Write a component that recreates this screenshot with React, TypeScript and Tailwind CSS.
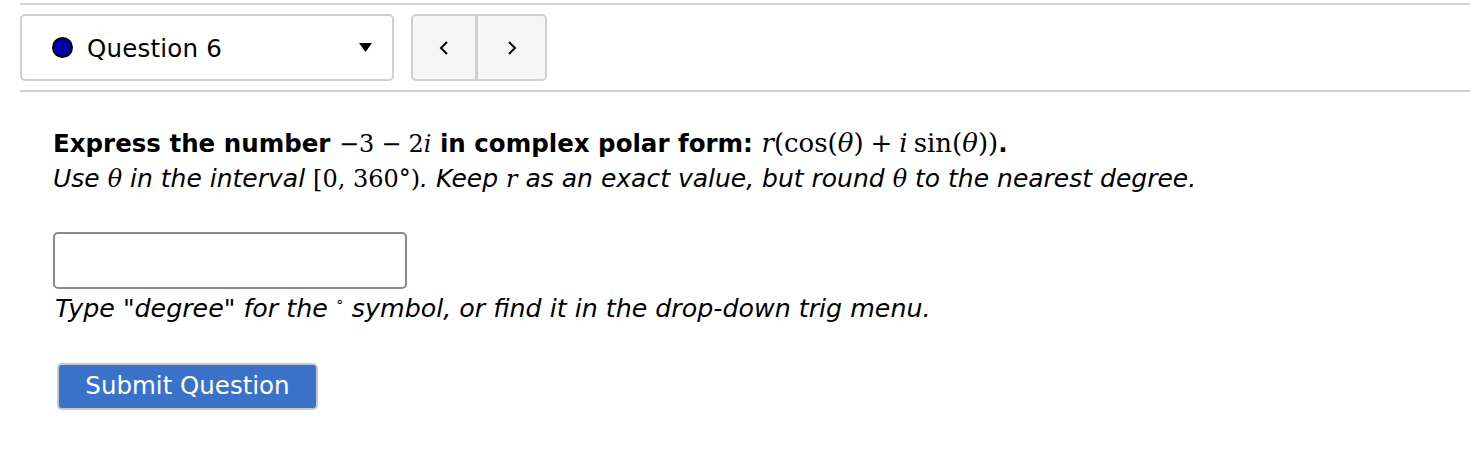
import React from 'react';

const M: React.FC<{ children: React.ReactNode; className?: string }> = ({ children, className }) => (
  <span className={`font-['DejaVu_Serif',serif] font-normal not-italic leading-none ${className ?? 'text-[24px]'}`}>{children}</span>
);

const V: React.FC<{ children: React.ReactNode }> = ({ children }) => <span className="italic">{children}</span>;

const Op: React.FC<{ children: React.ReactNode }> = ({ children }) => <span className="mx-[7px]">{children}</span>;

const App: React.FC = () => {
  return (
    <div className="w-[1470px] h-[454px] bg-white font-['DejaVu_Sans',sans-serif] text-black">
      <div className="pl-5 pt-[3px]">
        <div className="h-[2px] bg-[#d0d0d0]" />
        <div className="flex items-center gap-[17px] py-[9px]">
          <div className="w-[374px] h-[67px] border-2 border-[#d0d0d0] rounded-[5px] flex items-center pl-[30px] pr-[20px]">
            <span className="w-[21px] h-[21px] rounded-full bg-[#0000a8] border-2 border-black" />
            <span className="ml-[14px] mt-[3px] text-[24.5px] tracking-[0.2px]">Question 6</span>
            <svg className="ml-auto" width="13" height="9" viewBox="0 0 13 9">
              <path d="M0 0 L13 0 L6.5 9 Z" fill="#000" />
            </svg>
          </div>
          <div className="w-[136px] h-[67px] border-2 border-[#d0d0d0] rounded-[5px] bg-[#f6f6f6] flex">
            <button className="w-[65px] flex items-center justify-center border-r-[3px] border-[#d0d0d0]">
              <svg width="10" height="16" viewBox="0 0 10 16"><path d="M8 2 L2 8 L8 14" fill="none" stroke="#000" strokeWidth="2" /></svg>
            </button>
            <button className="flex-1 flex items-center justify-center">
              <svg width="10" height="16" viewBox="0 0 10 16"><path d="M2 2 L8 8 L2 14" fill="none" stroke="#000" strokeWidth="2" /></svg>
            </button>
          </div>
        </div>
        <div className="h-[2px] bg-[#d0d0d0]" />
      </div>

      <div className="pl-[53px] pt-[34px]">
        <p className="text-[24.5px] font-bold leading-[36px] whitespace-nowrap">
          Express the number <M>−3<Op>−</Op>2<V>i</V></M> in complex polar form:{' '}
          <M className="text-[26px]"><V>r</V>(cos(<V>θ</V>)<Op>+</Op><V>i</V><span className="ml-[6px]">sin(<V>θ</V>))</span></M>.
        </p>
        <p className="text-[25px] italic leading-[34px] whitespace-nowrap">
          Use <M><V>θ</V></M> in the interval <M>[0, 360°)</M>. Keep <M><V>r</V></M> as an exact value, but round <M><V>θ</V></M> to the nearest degree.
        </p>

        <input
          type="text"
          className="mt-[36px] block w-[354px] h-[57px] border-2 border-[#8a8a8a] rounded-[5px]"
        />
        <p className="text-[25.3px] italic leading-[40px] ml-[2px] whitespace-nowrap">
          Type "degree" for the <span className="not-italic text-[16px] align-top">˚</span> symbol, or find it in the drop-down trig menu.
        </p>

        <button className="mt-[34px] ml-[4px] w-[261px] h-[47px] bg-[#3b72c9] border-2 border-[#c9c9c9] rounded-[5px] text-white text-[24.5px]">
          Submit Question
        </button>
      </div>
    </div>
  );
};

export default App;
